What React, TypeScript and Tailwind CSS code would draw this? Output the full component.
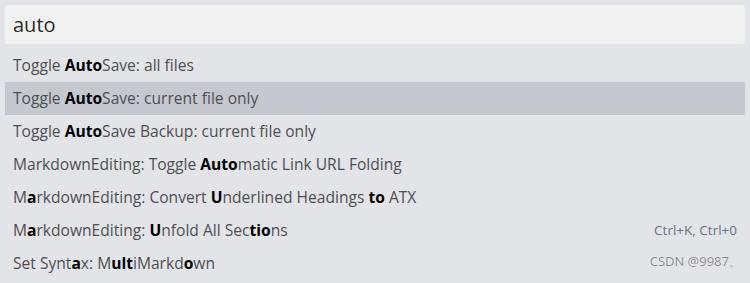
import React from "react";

type Seg = { t: string; b?: boolean };

const rows: { segs: Seg[]; key?: string; sel?: boolean }[] = [
  { segs: [{ t: "Toggle " }, { t: "Auto", b: true }, { t: "Save: all files" }] },
  { segs: [{ t: "Toggle " }, { t: "Auto", b: true }, { t: "Save: current file only" }], sel: true },
  { segs: [{ t: "Toggle " }, { t: "Auto", b: true }, { t: "Save Backup: current file only" }] },
  { segs: [{ t: "MarkdownEditing: Toggle " }, { t: "Auto", b: true }, { t: "matic Link URL Folding" }] },
  {
    segs: [
      { t: "M" },
      { t: "a", b: true },
      { t: "rkdownEditing: Convert " },
      { t: "U", b: true },
      { t: "nderlined Headings " },
      { t: "to", b: true },
      { t: " ATX" },
    ],
  },
  {
    segs: [
      { t: "M" },
      { t: "a", b: true },
      { t: "rkdownEditing: " },
      { t: "U", b: true },
      { t: "nfold All Sec" },
      { t: "ti", b: true },
      { t: "o", b: true },
      { t: "ns" },
    ],
    key: "Ctrl+K, Ctrl+0",
  },
  {
    segs: [
      { t: "Set Synt" },
      { t: "a", b: true },
      { t: "x: M" },
      { t: "ult", b: true },
      { t: "iMarkd" },
      { t: "o", b: true },
      { t: "wn" },
    ],
  },
];

export default function App() {
  return (
    <div
      className="w-[750px] h-[283px] bg-[#e3e4e8] px-[5px] pt-[5px] overflow-hidden relative"
      style={{ fontFamily: '"Open Sans", "Noto Sans", sans-serif' }}
    >
      <div className="h-[39px] bg-[#f2f2f2] rounded-[3px] flex items-center pl-[8px] text-[20px] text-[#2b2b2b]">
        auto
      </div>
      <div className="mt-[5px]">
        {rows.map((r, i) => (
          <div
            key={i}
            className={
              "h-[33px] flex items-center justify-between pl-[8px] pr-[8px] text-[15.6px] text-[#4f4f52] " +
              (r.sel ? "bg-[#c6c8d0]" : "")
            }
          >
            <span className="whitespace-pre">
              {r.segs.map((s, j) =>
                s.b ? (
                  <b key={j} className="font-bold text-black">
                    {s.t}
                  </b>
                ) : (
                  <span key={j}>{s.t}</span>
                )
              )}
            </span>
            {r.key && <span className="text-[13.5px] text-[#6d7280]">{r.key}</span>}
          </div>
        ))}
      </div>
      <div
        className="absolute right-[8px] bottom-[12px] text-[13px] text-[#8a8a8a]"
        style={{ textShadow: "0 0 1px #fff" }}
      >
        CSDN @9987。
      </div>
    </div>
  );
}
